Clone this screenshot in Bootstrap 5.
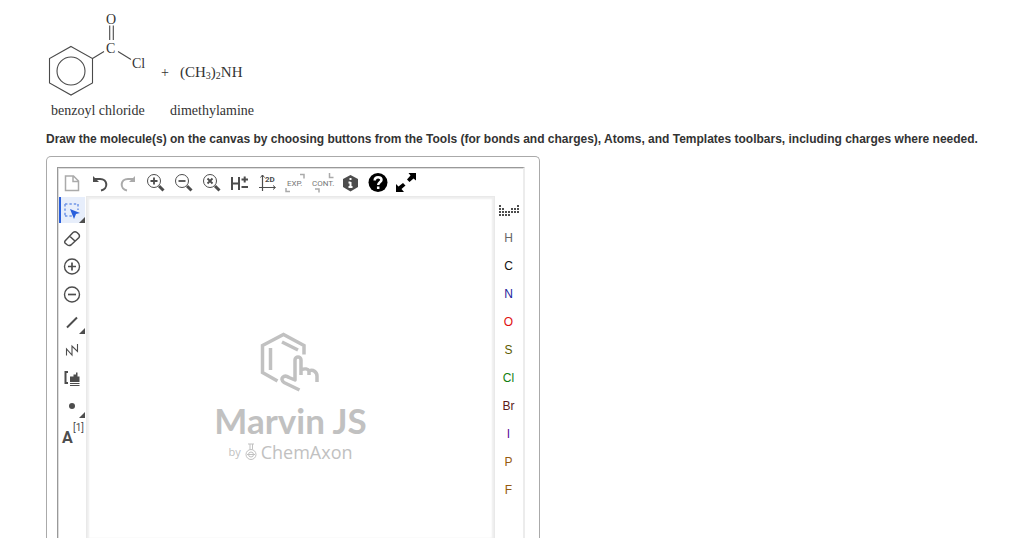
<!DOCTYPE html>
<html lang="en">
<head>
<meta charset="utf-8">
<meta name="viewport" content="width=device-width, initial-scale=1">
<title>Draw the molecule</title>
<link rel="stylesheet" href="https://cdn.jsdelivr.net/npm/bootstrap@5.3.0/dist/css/bootstrap.min.css">
<style>
  body { font-family: "Liberation Sans", Arial, sans-serif; color: #333; background: #fff; padding-left: 46px; }
  .reaction { width: 212px; height: 128px; }
  .reaction text { font-family: "Liberation Serif", "Times New Roman", serif; font-size: 14px; fill: #333; }
  .reaction .formula { font-size: 15px; }
  .reaction .sub-digit { font-size: 10px; }
  .prompt { font-size: 12px; line-height: 22px; font-weight: 700; }
  .panel { max-width: 494px; margin-top: 6px; padding: 10px 14px 0 10px; border: 1px solid #aaa; border-bottom: 0; border-radius: 5px 5px 0 0; }
  .editor { border: solid; border-width: 1px 2px 0 1px; border-color: #999 #ececec #999 #999; box-shadow: inset 1px 1px #ddd; }
  .tools { height: 28px; }
  .tool { width: 28px; height: 28px; flex: none; padding: 0; border: 0; border-radius: 0; color: #4d4d4d; line-height: 28px; }
  .tool svg { display: block; width: 28px; height: 28px; fill: none; stroke: currentColor; }
  .tool text { fill: currentColor; stroke: none; font-family: Roboto, sans-serif; }
  .tool .tiny { font-size: 8px; fill: #777; }
  .tool:disabled { opacity: 1; color: #aaa; }
  .canvas { border: solid #e9e9e9; border-width: 1px 1px 0 1px; box-shadow: inset 2px 2px 2px #eee, inset -2px 0 2px #eee; padding-top: 135px; color: #c1c1c1; font-family: "Open Sans", sans-serif; }
  .elements { width: 28px; }
  .atom { font-size: 12px; width: 27px; line-height: 27px; }
  .el-h { color: #666; } .el-c { color: #111; } .el-n { color: #22229c; } .el-o { color: #e01010; }
  .el-s { color: #5c5c00; } .el-cl { color: #108010; } .el-br { color: #5a1a1a; } .el-i { color: #5c0c9c; } .el-p { color: #965a10; }
  .brand { font-family: Lato, sans-serif; font-size: 35px; line-height: 44px; font-weight: 700; margin-top: 5px; }
  .maker { font-size: 18px; line-height: 20px; gap: 4px; }
  .by { font-size: 11px; }
</style>
<script src="https://cdn.jsdelivr.net/npm/bootstrap@5.3.0/dist/js/bootstrap.bundle.min.js"></script>
</head>
<body>
<main class="d-flex flex-column vh-100 overflow-hidden">
  <svg class="reaction flex-shrink-0" viewBox="0 0 212 128" role="img" aria-label="Benzoyl chloride plus dimethylamine">
    <g fill="none" stroke="#4a4a4a" stroke-width="1.1">
      <path d="M25 46.500 L46.500 58.500 V83 L25 95 L3.500 83 V58.500Z M46.500 58.500L58 51.500 M72 51.500L85 59.500 M63.700 25.500V40 M67.300 25.500V40"/>
      <circle cx="25" cy="71" r="14"/>
    </g>
    <text x="60" y="24">O</text>
    <text x="60" y="53">C</text>
    <text x="86" y="68">Cl</text>
    <text x="115" y="77">+</text>
    <text class="formula" x="134" y="77">(CH<tspan class="sub-digit" dy="2">3</tspan><tspan dy="-2">)</tspan><tspan class="sub-digit" dy="2">2</tspan><tspan dy="-2">NH</tspan></text>
    <text x="5" y="115">benzoyl chloride</text>
    <text x="124" y="115">dimethylamine</text>
  </svg>
  <p class="prompt mb-0 flex-shrink-0">Draw the molecule(s) on the canvas by choosing buttons from the Tools (for bonds and charges), Atoms, and Templates toolbars, including charges where needed.</p>

  <section class="panel w-100 flex-fill d-flex" aria-label="Molecule editor">
    <div class="editor flex-fill d-flex flex-column">
      <div class="tools d-flex flex-shrink-0" role="toolbar" aria-label="General">
        <button class="btn tool" disabled aria-label="New"><svg viewBox="0 0 28 28" stroke-width="1.500"><path d="M7.500 8H15.500L20.500 13V22.500H7.500Z M15 8.500V13.500H20.500"/></svg></button>
        <button class="btn tool" aria-label="Undo"><svg viewBox="0 0 28 28"><path d="M9 11H14C22 11 22.500 21 15 22.500" stroke-width="2"/><path d="M7 8V14H13Z" fill="currentColor" stroke="none"/></svg></button>
        <button class="btn tool" disabled aria-label="Redo"><svg viewBox="0 0 28 28"><path d="M19 11H14C6 11 5.500 21 13 22.500" stroke-width="2"/><path d="M21 8V14H15Z" fill="currentColor" stroke="none"/></svg></button>
        <button class="btn tool" aria-label="Zoom in"><svg viewBox="0 0 28 28"><circle cx="12" cy="13" r="6.500"/><path d="M8.500 13H15.500M12 9.500V16.500" stroke-width="1.800"/><path d="M17 18L21.500 22.500" stroke-width="3"/></svg></button>
        <button class="btn tool" aria-label="Zoom out"><svg viewBox="0 0 28 28"><circle cx="12" cy="13" r="6.500"/><path d="M8.500 13H15.500" stroke-width="1.800"/><path d="M17 18L21.500 22.500" stroke-width="3"/></svg></button>
        <button class="btn tool" aria-label="Zoom to fit"><svg viewBox="0 0 28 28"><circle cx="12" cy="13" r="6.500"/><path d="M9.500 10.500L14.500 15.500M14.500 10.500L9.500 15.500" stroke-width="1.800"/><path d="M17 18L21.500 22.500" stroke-width="3"/></svg></button>
        <button class="btn tool" aria-label="Hydrogens"><svg viewBox="0 0 28 28" stroke-width="2"><path d="M6 9V22M13 9V22M6 15.500H13M15.500 11.500H22M18.700 8.500V14.500M15.500 19H22"/></svg></button>
        <button class="btn tool" aria-label="Clean 2D"><svg viewBox="0 0 28 28"><path d="M8.500 7V23M5 19.500H21" stroke-width="1.200"/><path d="M6.500 9.500L8.500 7L10.500 9.500M19 17.500L21.500 19.500L19 21.500" stroke-width="1"/><text x="11" y="14" font-size="8" font-weight="700">2D</text></svg></button>
        <button class="btn tool" disabled aria-label="Expand"><svg viewBox="0 0 28 28"><path d="M18 6.500H22V10.500M4 20V23.500H8" stroke-width="1.500"/><text class="tiny" x="5" y="18">EXP.</text></svg></button>
        <button class="btn tool" disabled aria-label="Contract"><svg viewBox="0 0 28 28"><path d="M19.500 5V9.500H23.500M5 21H9V24.500" stroke-width="1.500"/><text class="tiny" x="2" y="18">CONT.</text></svg></button>
        <button class="btn tool" aria-label="Information"><svg viewBox="0 0 28 28" stroke="none"><path fill="currentColor" stroke="none" d="M12.500 7L20 11V19L12.500 23.500L5 19V11Z"/><path stroke="#fff" stroke-width="2" d="M12.500 14V19M12.500 10V12M10.500 14.500H12.500M10.500 19H14.500"/></svg></button>
        <button class="btn tool text-black" aria-label="Help"><svg viewBox="0 0 28 28"><circle cx="12" cy="14.500" r="9.500" fill="#000" stroke="none"/><path stroke="#fff" stroke-width="2.500" d="M8.700 12.500C8.700 8 15.500 8.500 15.500 12C15.500 14 12.200 14 12.200 17M12.200 18.500V21"/></svg></button>
        <button class="btn tool text-black" aria-label="Full screen"><svg viewBox="0 0 28 28"><path stroke="none" fill="#000" d="M14.500 5H22V12.500L19.500 10.500L15.500 14L13 11.500L16.500 7.500Z M2 16V24H10L7.500 21L11.500 17.500L9 15L4.500 18.500Z"/></svg></button>
      </div>

      <div class="d-flex flex-fill">
        <div class="d-flex flex-column" role="toolbar" aria-label="Tools">
          <button class="btn tool" aria-label="Select"><svg viewBox="0 0 28 28"><path d="M1 1H27V27H1Z" fill="#e7eefb" stroke="none"/><path d="M1 1H3V27H1Z" fill="#2a5fdc" stroke="none"/><path d="M7 8H20M7 20H14M7 8V20M20 8V14" stroke="#6f95e8" stroke-width="1.500" stroke-dasharray="2.400 2"/><path d="M12 13L22 17L18 18L16 23Z" fill="#2a5fdc" stroke="none"/><path d="M27 21V27H21Z" fill="currentColor" stroke="none"/></svg></button>
          <button class="btn tool" aria-label="Erase"><svg viewBox="0 0 28 28" stroke-width="1.500"><path d="M7 17L15 8.500Q17 7 19 8.500L21 10.500Q22 12 21 13.500L13 21Q11 22 9.500 21L7 19Q6.300 18 7 17Z M11.500 12L17.500 17.500"/></svg></button>
          <button class="btn tool" aria-label="Increase charge"><svg viewBox="0 0 28 28" stroke-width="1.400"><circle cx="14" cy="14.500" r="7.500"/><path d="M10 14.500H18M14 10.500V18.500" stroke-width="1.700"/></svg></button>
          <button class="btn tool" aria-label="Decrease charge"><svg viewBox="0 0 28 28" stroke-width="1.400"><circle cx="14" cy="14.500" r="7.500"/><path d="M10 14.500H18" stroke-width="1.700"/></svg></button>
          <button class="btn tool" aria-label="Single bond"><svg viewBox="0 0 28 28"><path d="M9 19.500L19 9.500" stroke-width="2"/><path d="M27 20V26H21Z" fill="currentColor" stroke="none"/></svg></button>
          <button class="btn tool" aria-label="Chain"><svg viewBox="0 0 28 28"><path d="M8.500 19.500V13L14 19V10L19.500 15.500V8" stroke-width="1.100"/></svg></button>
          <button class="btn tool" aria-label="Brackets"><svg viewBox="0 0 28 28"><path d="M10 8H7.500V19H10" stroke-width="2"/><path d="M12 12.500H15.500V10.500H18V8.500H19.500V12.500H21.500V18H12Z" fill="currentColor" stroke="none"/><path d="M12 19.500H21.500M12 21.500H21.500" stroke-width="1"/></svg></button>
          <button class="btn tool" aria-label="Lone electron"><svg viewBox="0 0 28 28"><circle cx="14" cy="14" r="3" fill="currentColor" stroke="none"/><path d="M27 20V26H21Z" fill="currentColor" stroke="none"/></svg></button>
          <button class="btn tool" aria-label="Atom map"><svg viewBox="0 0 28 28"><text x="4" y="23" font-size="16" font-weight="700">A</text><text x="15" y="11" font-size="10">[1]</text></svg></button>
        </div>

        <div class="canvas flex-fill d-flex flex-column align-items-center">
          <svg width="62" height="61" viewBox="0 0 62 61" fill="none" stroke="#c1c1c1" stroke-width="3.500" aria-hidden="true">
            <path d="M17.500 49L2.500 40.500V13.500L23.500 2.500L44 13.500V22.500M22 10L38 18M10.500 16V38"/>
            <path d="M39.500 58L24 50.500C19 46.500 24 42 29 45.500L35 48V28C35 24 41 24 41 28V43M41 38C45 36 48 37 49 39M49 43V39C53 37 57 40 57 44V50" stroke-linejoin="round"/>
          </svg>
          <div class="brand">Marvin JS</div>
          <div class="maker d-flex align-items-center">
            <span class="by">by</span>
            <svg width="12" height="18" viewBox="0 0 12 18" fill="none" stroke="#c1c1c1" aria-hidden="true"><path d="M3 1H9M5 1V6.500M7.500 1V6.500"/><circle cx="6" cy="11.500" r="5"/><circle cx="6" cy="11.500" r="2.500"/><path d="M2 11.500H10"/></svg>
            <span>ChemAxon</span>
          </div>
        </div>

        <div class="elements d-flex flex-column" role="toolbar" aria-label="Atoms">
          <button class="btn tool atom" aria-label="Periodic table"><svg viewBox="0 0 28 28"><g stroke-width="2" stroke-dasharray="2 1"><path d="M4 10H6M22 10H24M4 13H9M16 13H24M4 16H24M4 19H15"/></g></svg></button>
          <button class="btn tool atom el-h">H</button>
          <button class="btn tool atom el-c">C</button>
          <button class="btn tool atom el-n">N</button>
          <button class="btn tool atom el-o">O</button>
          <button class="btn tool atom el-s">S</button>
          <button class="btn tool atom el-cl">Cl</button>
          <button class="btn tool atom el-br">Br</button>
          <button class="btn tool atom el-i">I</button>
          <button class="btn tool atom el-p">P</button>
          <button class="btn tool atom el-p">F</button>
        </div>
      </div>
    </div>
  </section>
</main>
</body>
</html>
